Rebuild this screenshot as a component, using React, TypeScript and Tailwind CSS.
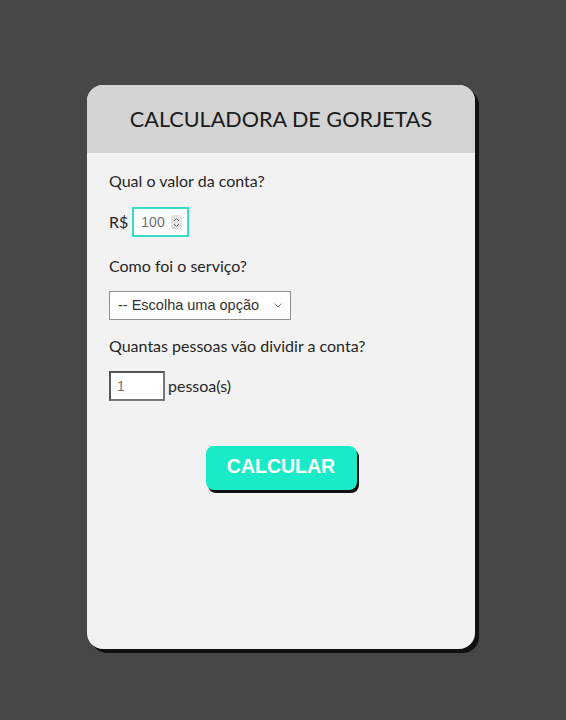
import { useState } from "react";

export default function App() {
  const [valor, setValor] = useState("100");
  const [servico, setServico] = useState("");
  const [pessoas, setPessoas] = useState("1");

  return (
    <div className="min-h-[720px] w-full bg-[#474747] pt-[85px] font-['Lato',sans-serif]">
      <div className="ml-[87px] h-[564px] w-[388px] overflow-hidden rounded-[16px] bg-[#f2f2f2] shadow-[4px_4px_0_#111]">
        {/* Header */}
        <div className="flex h-[68px] items-center justify-center bg-[#d3d3d3]">
          <h1 className="text-[21.6px] font-normal text-[#1a1a1a]">
            CALCULADORA DE GORJETAS
          </h1>
        </div>

        {/* Formulário */}
        <div className="px-[22px] pt-[18px] text-[16px] text-[#262626]">
          <p className="leading-[20px]">Qual o valor da conta?</p>

          <div className="mt-[16px] flex items-center gap-[4px]">
            <span>R$</span>
            <div className="relative">
              <input
                type="text"
                value={valor}
                onChange={(e) => setValor(e.target.value)}
                className="h-[30px] w-[57px] border-2 border-[#36dcc6] bg-white pl-[7px] font-['Liberation_Sans',sans-serif] text-[14px] text-[#6e6e6e] outline-none"
              />
              <div className="absolute right-[7px] top-[8px] flex h-[14px] w-[11px] items-center justify-center rounded-[2px] bg-[#e4e4e4]">
                <svg width="7" height="11" viewBox="0 0 7 11" fill="none" stroke="#666" strokeWidth="1">
                  <path d="M1 4 L3.5 1.5 L6 4" />
                  <path d="M1 7 L3.5 9.5 L6 7" />
                </svg>
              </div>
            </div>
          </div>

          <p className="mt-[19px] leading-[20px]">Como foi o serviço?</p>

          <div className="relative mt-[15px] w-[182px]">
            <select
              value={servico}
              onChange={(e) => setServico(e.target.value)}
              className="h-[29px] w-[182px] appearance-none border border-[#8f8f8f] bg-white pl-[8px] font-['Liberation_Sans',sans-serif] text-[14.5px] text-[#333] outline-none"
            >
              <option value="">-- Escolha uma opção</option>
              <option value="0.3">30% - Muito bom</option>
              <option value="0.1">10% - Bom</option>
              <option value="0.05">5% - Ruim</option>
            </select>
            <svg
              className="pointer-events-none absolute right-[9px] top-[12px]"
              width="8"
              height="5"
              viewBox="0 0 8 5"
              fill="none"
              stroke="#777"
              strokeWidth="1"
            >
              <path d="M0.5 0.5 L4 4 L7.5 0.5" />
            </svg>
          </div>

          <p className="mt-[16px] leading-[20px]">Quantas pessoas vão dividir a conta?</p>

          <div className="mt-[15px] flex items-center gap-[3px]">
            <input
              type="text"
              value={pessoas}
              onChange={(e) => setPessoas(e.target.value)}
              className="h-[30px] w-[56px] border-2 border-t-[#555] border-l-[#555] border-r-[#777] border-b-[#777] bg-white pl-[6px] font-['Liberation_Sans',sans-serif] text-[14px] text-[#757575] outline-none"
            />
            <span>pessoa(s)</span>
          </div>

          <div className="mt-[45px] flex justify-center">
            <button className="h-[44px] w-[151px] rounded-[8px] bg-[#19ebc9] pb-[2px] font-['Liberation_Sans',sans-serif] text-[19.5px] font-bold text-white shadow-[2px_3px_0_#111]">
              CALCULAR
            </button>
          </div>
        </div>
      </div>
    </div>
  );
}
